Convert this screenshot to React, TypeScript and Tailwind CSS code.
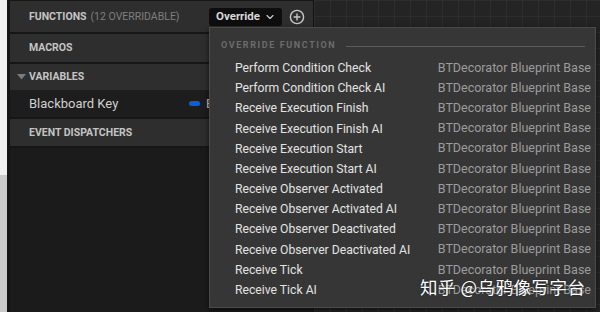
import { ChevronDown } from 'lucide-react';

const items = [
  'Perform Condition Check',
  'Perform Condition Check AI',
  'Receive Execution Finish',
  'Receive Execution Finish AI',
  'Receive Execution Start',
  'Receive Execution Start AI',
  'Receive Observer Activated',
  'Receive Observer Activated AI',
  'Receive Observer Deactivated',
  'Receive Observer Deactivated AI',
  'Receive Tick',
  'Receive Tick AI',
];

function PlusCircle() {
  return (
    <svg width="16" height="16" viewBox="0 0 16 16" fill="none" stroke="#c8c8c8" strokeWidth="1.4">
      <circle cx="8" cy="8" r="6.6" />
      <path d="M8 4.6v6.8M4.6 8h6.8" />
    </svg>
  );
}

export default function App() {
  return (
    <div className="relative flex w-[600px] h-[312px] overflow-hidden bg-[#1b1b1b] font-['Roboto',sans-serif]">
      {/* light window edge on the left */}
      <div className="flex flex-col w-[7px] shrink-0">
        <div className="h-[175px] bg-[#efefef]" />
        <div className="flex-1 bg-[#c9c9c9]" />
      </div>
      <div className="w-[3px] shrink-0 bg-[#141414]" />

      {/* my blueprint panel */}
      <div className="w-[303px] shrink-0 flex flex-col gap-[2px] pt-[1px] bg-[#161616]">
        <div className="h-[31px] bg-[#2e2e2e] flex items-center pl-[19px] pr-[8px]">
          <span className="text-[10.5px] font-bold text-[#c4c4c4]">FUNCTIONS</span>
          <span className="ml-[4px] text-[10.5px] text-[#7e7e7e]">(12 OVERRIDABLE)</span>
          <div className="ml-auto flex items-center gap-[7px]">
            <div className="h-[18px] w-[73px] rounded-[3px] bg-[#0e0e0e] flex items-center pl-[7px] gap-[4px]">
              <span className="text-[11.5px] font-bold text-[#d8d8d8]">Override</span>
              <ChevronDown className="w-[12px] h-[12px] text-[#d0d0d0]" strokeWidth={2.2} />
            </div>
            <PlusCircle />
          </div>
        </div>
        <div className="h-[28px] bg-[#2e2e2e] flex items-center pl-[19px]">
          <span className="text-[10.5px] font-bold text-[#c4c4c4]">MACROS</span>
        </div>
        <div className="flex flex-col">
          <div className="h-[26px] bg-[#2e2e2e] flex items-center pl-[7px]">
            <svg width="10" height="6" viewBox="0 0 10 6" className="mr-[2px]">
              <path d="M0 0h9L4.5 5.5z" fill="#7c7c7c" />
            </svg>
            <span className="text-[10.5px] font-bold text-[#c4c4c4]">VARIABLES</span>
          </div>
          <div className="h-[27px] bg-[#1d1d1d] flex items-center pl-[19px]">
            <span className="w-[160px] shrink-0 text-[13px] text-[#cfcfcf]">Blackboard Key</span>
            <div className="w-[11px] h-[5px] shrink-0 rounded-full bg-[#0b5fd6]" />
            <span className="ml-[6px] text-[13px] text-[#cfcfcf]">B</span>
          </div>
        </div>
        <div className="h-[27px] bg-[#2e2e2e] flex items-center pl-[19px]">
          <span className="text-[10.5px] font-bold text-[#c4c4c4]">EVENT DISPATCHERS</span>
        </div>
        <div className="flex-1 bg-[#1b1b1b]" />
      </div>

      {/* graph canvas */}
      <div className="flex-1 bg-[#242424] bg-[linear-gradient(to_right,#2d2d2d_1px,transparent_1px),linear-gradient(to_bottom,#2d2d2d_1px,transparent_1px)] bg-[size:16px_16px] border-l border-[#121212]" />

      {/* override function dropdown */}
      <div className="absolute left-[209px] top-[27px] w-[387px] h-[281px] bg-[#363636] border border-[#4a4a4a] shadow-[0_2px_6px_rgba(0,0,0,0.6)] pt-[11px] pl-[11px] pr-[4px]">
        <div className="flex items-center gap-[10px] h-[14px]">
          <span className="text-[9px] font-bold tracking-[1.6px] text-[#6c6c6c]">OVERRIDE FUNCTION</span>
          <div className="flex-1 h-px bg-[#5c5c5c] mr-[6px]" />
        </div>
        <div className="flex flex-col mt-[5px] pl-[14px]">
          {items.map((name) => (
            <div key={name} className="h-[20.2px] flex items-center justify-between">
              <span className="text-[12.2px] text-[#e2e2e2]">{name}</span>
              <span className="text-[12.5px] text-[#9c9c9c]">BTDecorator Blueprint Base</span>
            </div>
          ))}
        </div>
      </div>

      {/* watermark */}
      <div className="absolute left-[420px] top-[274px] text-[17.5px] text-white tracking-[0.5px] [text-shadow:0_0_2px_rgba(0,0,0,0.6)] font-['Noto_Sans_CJK_SC',sans-serif]">
        知乎 @乌鸦像写字台
      </div>
    </div>
  );
}
